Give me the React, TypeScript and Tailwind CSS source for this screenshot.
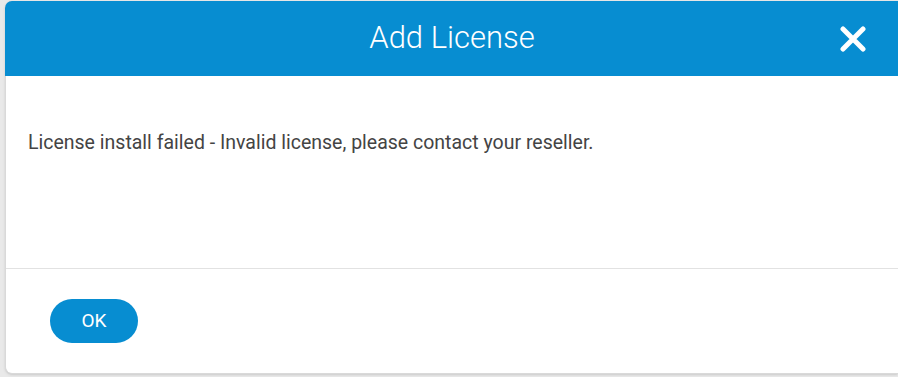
import React from "react";

export default function App() {
  return (
    <div className="h-[377px] w-full overflow-hidden bg-[#e9e9e9] pt-px pl-[5px] font-['Roboto','Liberation_Sans',sans-serif]">
      <div className="flex h-[373px] flex-col rounded-l-[7px] border border-r-0 border-[#d9d9d9] bg-white shadow-sm">
        {/* Header */}
        <div className="relative -mx-px -mt-px flex h-[75px] items-center justify-center rounded-tl-[7px] bg-[#078dd1]">
          <h1 className="text-[31px] font-light text-white">Add License</h1>
          <button className="absolute right-[33px] top-[25px] text-white">
            <svg width="26" height="26" viewBox="0 0 26 26" fill="none">
              <path d="M3 3 L23 23 M23 3 L3 23" stroke="white" strokeWidth="5" strokeLinecap="round" />
            </svg>
          </button>
        </div>

        {/* Body */}
        <div className="h-[193px] border-b border-[#e2e2e2] pl-[22px] pt-[52px]">
          <p className="text-[19.5px] text-[#444]">
            License install failed - Invalid license, please contact your reseller.
          </p>
        </div>

        {/* Footer */}
        <div className="pl-[44px] pt-[30px]">
          <button className="h-[44px] w-[88px] rounded-full bg-[#078dd1] text-[19px] font-normal text-white">
            OK
          </button>
        </div>
      </div>
    </div>
  );
}
